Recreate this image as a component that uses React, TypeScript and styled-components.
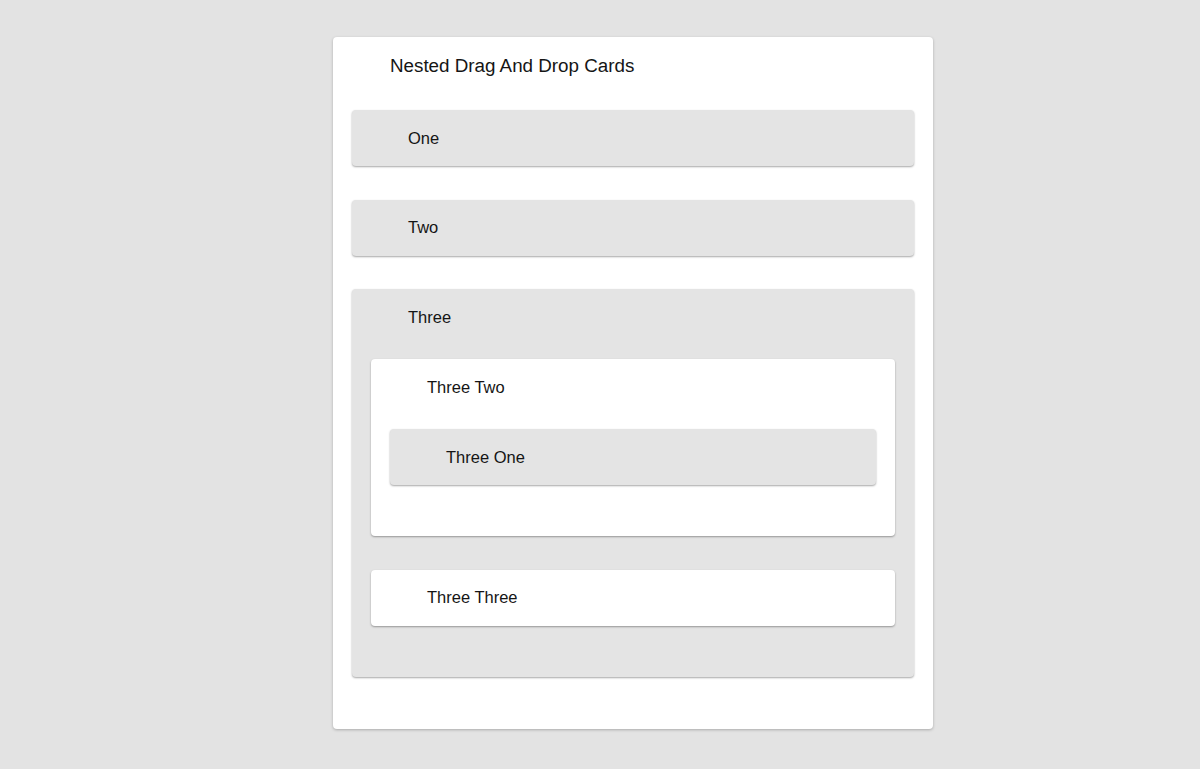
import React from "react";
import styled, { createGlobalStyle } from "styled-components";

const Global = createGlobalStyle`
  html, body { margin: 0; padding: 0; background: #e3e3e3; }
  body { font-family: "Liberation Sans", Arial, sans-serif; color: #151515; }
`;

const Page = styled.div`
  display: flex;
  justify-content: center;
  align-items: flex-start;
  padding: 37px 0 0 66px;
  min-height: 769px;
  box-sizing: border-box;
`;

const Board = styled.div`
  width: 600px;
  background: #fff;
  border-radius: 4px;
  box-shadow: 0 1px 3px rgba(0, 0, 0, 0.25);
  padding: 0 19px 52px;
  box-sizing: border-box;
`;

const BoardTitle = styled.div`
  height: 59px;
  padding-bottom: 1px;
  box-sizing: border-box;
  display: flex;
  align-items: center;
  font-size: 18.8px;
  margin: 0 -19px;
  padding-left: 57px;
`;

const List = styled.div`
  display: flex;
  flex-direction: column;
  gap: 33.5px;
  margin-top: 14px;
`;

const CardBox = styled.div<{ $tone: "gray" | "white"; $nested: boolean }>`
  background: ${(p) => (p.$tone === "gray" ? "#e4e4e4" : "#ffffff")};
  border-radius: 4px;
  box-shadow: 0 1px 2px rgba(0, 0, 0, 0.35);
  padding: 0 19px ${(p) => (p.$nested ? "51px" : "0")};
`;

const CardHeader = styled.div`
  height: 56px;
  display: flex;
  align-items: center;
  margin: 0 -19px;
  padding-left: 56px;
  font-size: 16.5px;
  box-sizing: border-box;
`;

type Item = { title: string; children?: Item[] };

const data: Item[] = [
  { title: "One" },
  { title: "Two" },
  {
    title: "Three",
    children: [
      { title: "Three Two", children: [{ title: "Three One" }] },
      { title: "Three Three" },
    ],
  },
];

const Card: React.FC<{ item: Item; depth: number }> = ({ item, depth }) => {
  const tone = depth % 2 === 0 ? "gray" : "white";
  const nested = !!item.children && item.children.length > 0;
  return (
    <CardBox $tone={tone} $nested={nested}>
      <CardHeader>{item.title}</CardHeader>
      {nested && (
        <List>
          {item.children!.map((c) => (
            <Card key={c.title} item={c} depth={depth + 1} />
          ))}
        </List>
      )}
    </CardBox>
  );
};

export default function App() {
  return (
    <>
      <Global />
      <Page>
        <Board>
          <BoardTitle>Nested Drag And Drop Cards</BoardTitle>
          <List>
            {data.map((d) => (
              <Card key={d.title} item={d} depth={0} />
            ))}
          </List>
        </Board>
      </Page>
    </>
  );
}
